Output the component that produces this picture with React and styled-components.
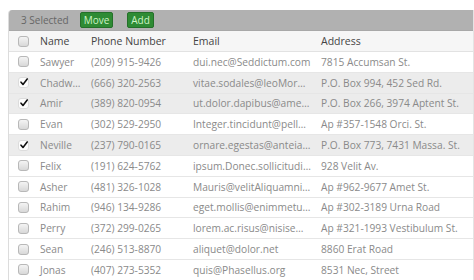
import React, { useState } from "react";
import styled, { createGlobalStyle } from "styled-components";

const GlobalStyle = createGlobalStyle`
  html, body {
    margin: 0;
    padding: 0;
    background: #ffffff;
    overflow: hidden;
  }
  body {
    font-family: "Open Sans", "DejaVu Sans", sans-serif;
  }
`;

const Page = styled.div`
  padding: 10px 0 0 8px;
`;

const Grid = styled.div`
  width: 466px;
  box-sizing: border-box;
  border-left: 1px solid #dcdcdc;
  border-right: 1px solid #e4e4e4;
  border-top-left-radius: 4px;
  overflow: hidden;
`;

const Toolbar = styled.div`
  display: flex;
  align-items: center;
  height: 21px;
  padding-left: 12px;
  background: #b1b1b1;
  border-bottom: 1px solid #a8a8a8;
  box-sizing: border-box;
`;

const Count = styled.span`
  font-size: 10px;
  color: #666;
  margin-right: 11px;
`;

const ToolButton = styled.button`
  height: 16px;
  padding: 0 3px;
  margin-right: 14px;
  border: 1px solid #24702a;
  border-radius: 2px;
  background: #2e8b34;
  color: #cdf3c6;
  font-family: "Open Sans", "DejaVu Sans", sans-serif;
  font-size: 10px;
  line-height: 14px;
  cursor: pointer;
`;

const Table = styled.table`
  width: 100%;
  border-collapse: collapse;
  table-layout: fixed;
`;

const HeadRow = styled.tr`
  background: #f6f6f6;
`;

const Th = styled.th`
  height: 20px;
  padding: 0 6px 0 4px;
  text-align: left;
  font-weight: normal;
  font-size: 10.5px;
  color: #444;
  border-bottom: 1px solid #e2e2e2;
  white-space: nowrap;
`;

const Row = styled.tr`
  background: ${(p) => (p.$selected ? "#ececec" : "#ffffff")};
`;

const Td = styled.td`
  height: 19.8px;
  padding: 0 ${(p) => (p.$last ? "0" : "6px")} 0 4px;
  font-size: 10.2px;
  color: #8a8a8a;
  border-bottom: 1px solid #e6e6e6;
  white-space: nowrap;
  overflow: hidden;
  text-overflow: ellipsis;
`;

const BoxCell = styled.td`
  height: 19.8px;
  padding: 0 0 0 9px;
  border-bottom: 1px solid #e6e6e6;
`;

const BoxHead = styled.th`
  height: 20px;
  padding: 0 0 0 9px;
  border-bottom: 1px solid #e2e2e2;
`;

const Check = styled.span`
  display: block;
  width: 9px;
  height: 9px;
  border: 1px solid ${(p) => (p.$on ? "#dcdcdc" : "#b8b8b8")};
  border-radius: 3px;
  background: ${(p) =>
    p.$on ? "#fdfdfd" : "linear-gradient(#f4f4f4, #d8d8d8)"};
  position: relative;
  cursor: pointer;

  svg {
    position: absolute;
    left: 0;
    top: -1px;
  }
`;

const people = [
  ["Sawyer", "(209) 915-9426", "dui.nec@Seddictum.com", "7815 Accumsan St."],
  ["Chadwick", "(666) 320-2563", "vitae.sodales@leoMorbi.ca", "P.O. Box 994, 452 Sed Rd."],
  ["Amir", "(389) 820-0954", "ut.dolor.dapibus@amet.org", "P.O. Box 266, 3974 Aptent St."],
  ["Evan", "(302) 529-2950", "Integer.tincidunt@pellentesque.net", "Ap #357-1548 Orci. St."],
  ["Neville", "(237) 790-0165", "ornare.egestas@anteiaculis.edu", "P.O. Box 773, 7431 Massa. St."],
  ["Felix", "(191) 624-5762", "ipsum.Donec.sollicitudin@lacus.com", "928 Velit Av."],
  ["Asher", "(481) 326-1028", "Mauris@velitAliquamnisl.org", "Ap #962-9677 Amet St."],
  ["Rahim", "(946) 134-9286", "eget.mollis@enimmetus.co.uk", "Ap #302-3189 Urna Road"],
  ["Perry", "(372) 299-0265", "lorem.ac.risus@nisisem.net", "Ap #321-1993 Vestibulum St."],
  ["Sean", "(246) 513-8870", "aliquet@dolor.net", "8860 Erat Road"],
  ["Jonas", "(407) 273-5352", "quis@Phasellus.org", "8531 Nec, Street"],
];

const Tick = () => (
  <svg width="10" height="10" viewBox="0 0 10 10">
    <path
      d="M2 5.2 L4 7.4 L8.2 2"
      fill="none"
      stroke="#111"
      strokeWidth="1.6"
      strokeLinecap="round"
      strokeLinejoin="round"
    />
  </svg>
);

const CheckBox = ({ on, onClick }) => (
  <Check $on={on} onClick={onClick}>
    {on && <Tick />}
  </Check>
);

export default function App() {
  const [selected, setSelected] = useState([1, 2, 4]);

  const toggle = (i) => {
    setSelected((s) => (s.includes(i) ? s.filter((x) => x !== i) : [...s, i]));
  };

  return (
    <Page>
      <GlobalStyle />
      <Grid>
        <Toolbar>
          <Count>{selected.length} Selected</Count>
          <ToolButton>Move</ToolButton>
          <ToolButton>Add</ToolButton>
        </Toolbar>
        <Table>
          <colgroup>
            <col style={{ width: 27 }} />
            <col style={{ width: 51 }} />
            <col style={{ width: 102 }} />
            <col style={{ width: 128 }} />
            <col />
          </colgroup>
          <thead>
            <HeadRow>
              <BoxHead>
                <CheckBox on={false} />
              </BoxHead>
              <Th>Name</Th>
              <Th>Phone Number</Th>
              <Th>Email</Th>
              <Th>Address</Th>
            </HeadRow>
          </thead>
          <tbody>
            {people.map((p, i) => {
              const on = selected.includes(i);
              return (
                <Row key={p[0]} $selected={on}>
                  <BoxCell>
                    <CheckBox on={on} onClick={() => toggle(i)} />
                  </BoxCell>
                  <Td>{p[0]}</Td>
                  <Td>{p[1]}</Td>
                  <Td>{p[2]}</Td>
                  <Td $last>{p[3]}</Td>
                </Row>
              );
            })}
          </tbody>
        </Table>
      </Grid>
    </Page>
  );
}
